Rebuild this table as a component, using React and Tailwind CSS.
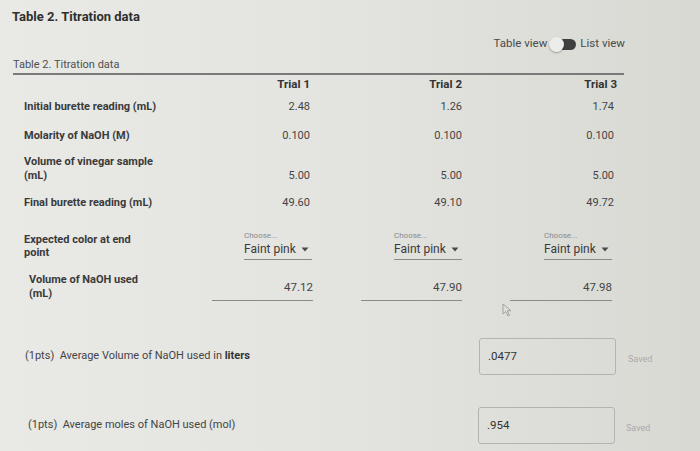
import React from "react";

const font = { fontFamily: "Roboto, 'Noto Sans', Arial, sans-serif" };

function Select({ className = "" }) {
  return (
    <div className={"flex flex-col w-[68px] border-b border-[#8a8a8a] " + className}>
      <span className="text-[8px] leading-[10px] text-[#8a8a8a]">Choose...</span>
      <div className="flex items-center justify-between h-[18px] pb-[2px]">
        <span className="text-[12px] text-[#3a3a3a]">Faint pink</span>
        <svg width="8" height="5" viewBox="0 0 8 5" className="mr-[3px]">
          <path d="M0.5 0.5 L7.5 0.5 L4 4.5 Z" fill="#4a4a4a" />
        </svg>
      </div>
    </div>
  );
}

function Cell({ children, className = "" }) {
  return (
    <div className={"flex justify-end text-[11px] text-[#444] " + className}>{children}</div>
  );
}

export default function App() {
  return (
    <div
      style={font}
      className="relative w-[700px] h-[451px] overflow-hidden bg-linear-to-r from-[#e9e9e6] via-[#e3e3df] to-[#d9d9d4] text-[#333]"
    >
      {/* Title */}
      <div className="pl-[12px] pt-[7px] h-[32px] text-[13px] font-bold text-[#2f2f2f]">
        Table 2. Titration data
      </div>

      {/* Toggle */}
      <div className="flex items-center justify-end pr-[75px] h-[24px] text-[11.5px] text-[#4a4a4a]">
        <span>Table view</span>
        <div className="relative w-[27px] h-[16px] ml-[2px] mr-[4px] flex items-center">
          <div className="absolute left-[8px] right-0 h-[11px] rounded-full bg-[#3f3f3f]" />
          <div className="absolute left-0 w-[15px] h-[15px] rounded-full bg-[#ececea] shadow-[0_1px_2px_rgba(0,0,0,0.3)]" />
        </div>
        <span>List view</span>
      </div>

      {/* Caption */}
      <div className="pl-[13px] pt-[1px] h-[17px] text-[11px] text-[#4f4f4f]">
        Table 2. Titration data
      </div>

      {/* Table */}
      <div className="ml-[13px] w-[611px] border-t-2 border-[#7a7a7a]">
        {/* Header */}
        <div className="grid grid-cols-[145px_152px_152px_152px] h-[20px] items-center text-[11.5px] font-bold text-[#333]">
          <div />
          <div className="text-right">Trial 1</div>
          <div className="text-right">Trial 2</div>
          <div className="text-right translate-x-[3px]">Trial 3</div>
        </div>

        {/* Row 1 */}
        <div className="grid grid-cols-[145px_152px_152px_152px] h-[24px] items-center">
          <div className="pl-[11px] text-[11px] font-bold text-[#3a3a3a] whitespace-nowrap">Initial burette reading (mL)</div>
          <Cell>2.48</Cell>
          <Cell>1.26</Cell>
          <Cell>1.74</Cell>
        </div>

        {/* Row 2 */}
        <div className="grid grid-cols-[145px_152px_152px_152px] h-[34px] items-center">
          <div className="pl-[11px] text-[11px] font-bold text-[#3a3a3a] whitespace-nowrap">Molarity of NaOH (M)</div>
          <Cell>0.100</Cell>
          <Cell>0.100</Cell>
          <Cell>0.100</Cell>
        </div>

        {/* Row 3 */}
        <div className="grid grid-cols-[145px_152px_152px_152px] h-[30px] items-end leading-[14px]">
          <div className="pl-[11px] text-[11px] font-bold text-[#3a3a3a]">
            Volume of vinegar sample<br />(mL)
          </div>
          <Cell>5.00</Cell>
          <Cell>5.00</Cell>
          <Cell>5.00</Cell>
        </div>

        {/* Row 4 */}
        <div className="grid grid-cols-[145px_152px_152px_152px] h-[40px] items-center">
          <div className="pl-[11px] text-[11px] font-bold text-[#3a3a3a] whitespace-nowrap">Final burette reading (mL)</div>
          <Cell>49.60</Cell>
          <Cell>49.10</Cell>
          <Cell>49.72</Cell>
        </div>

        {/* Row 5 */}
        <div className="grid grid-cols-[145px_152px_152px_152px] h-[45px] items-center">
          <div className="pl-[11px] text-[11px] leading-[13px] font-bold text-[#3a3a3a]">
            Expected color at end<br />point
          </div>
          <div className="flex justify-end"><Select className="translate-x-[2px]" /></div>
          <div className="flex justify-end"><Select /></div>
          <div className="flex justify-end"><Select className="-translate-x-[2px]" /></div>
        </div>

        {/* Row 6 */}
        <div className="grid grid-cols-[145px_152px_152px_152px] h-[38px] items-center">
          <div className="pl-[16px] text-[11px] leading-[14px] font-bold text-[#3a3a3a]">
            Volume of NaOH used<br />(mL)
          </div>
          <div className="flex justify-end translate-x-[3px]">
            <div className="w-[101px] border-b border-[#8a8a8a] text-right text-[11.5px] text-[#444] pt-[6px] pb-[3px]">47.12</div>
          </div>
          <div className="flex justify-end">
            <div className="w-[101px] border-b border-[#8a8a8a] text-right text-[11.5px] text-[#444] pt-[6px] pb-[3px]">47.90</div>
          </div>
          <div className="flex justify-end -translate-x-[2px]">
            <div className="w-[102px] border-b border-[#8a8a8a] text-right text-[11.5px] text-[#444] pt-[6px] pb-[3px]">47.98</div>
          </div>
        </div>
      </div>

      {/* Question 1 */}
      <div className="flex items-center mt-[32px] h-[37px]">
        <div className="w-[479px] pl-[25px] text-[11px] text-[#444]">
          (1pts)&nbsp; Average Volume of NaOH used in <span className="font-bold text-[#333]">liters</span>
        </div>
        <div className="w-[137px] h-[37px] border border-[#b3b3b0] rounded-[3px] flex items-center pl-[8px] text-[11.5px] text-[#333]">
          .0477
        </div>
        <div className="ml-[12px] pt-[6px] text-[9px] text-[#aaa]">Saved</div>
      </div>

      {/* Question 2 */}
      <div className="flex items-center mt-[32px] h-[37px]">
        <div className="w-[478px] pl-[28px] text-[11px] text-[#444]">
          (1pts)&nbsp; Average moles of NaOH used (mol)
        </div>
        <div className="w-[137px] h-[37px] border border-[#b3b3b0] rounded-[3px] flex items-center pl-[8px] text-[11.5px] text-[#333]">
          .954
        </div>
        <div className="ml-[11px] pt-[6px] text-[9px] text-[#aaa]">Saved</div>
      </div>

      {/* Mouse cursor */}
      <svg className="absolute left-[502px] top-[303px]" width="12" height="14" viewBox="0 0 12 14">
        <path d="M1 1 L1 11 L3.5 8.5 L6 13 L7.5 12.3 L5.2 7.8 L9 7.8 Z" fill="none" stroke="#9a9a9a" strokeWidth="0.9" />
      </svg>
    </div>
  );
}
